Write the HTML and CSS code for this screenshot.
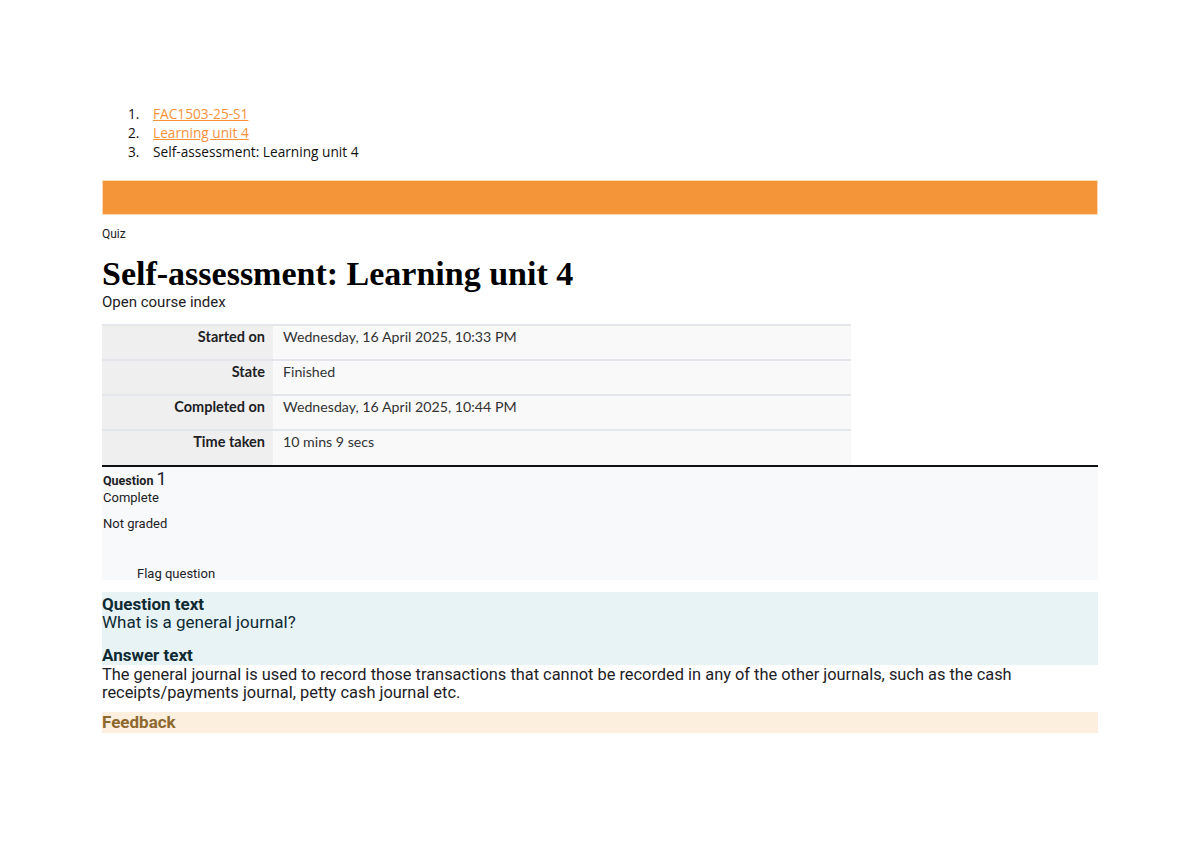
FILE: index.html
```html
<!DOCTYPE html>
<html>
<head>
<meta charset="utf-8">
<link rel="stylesheet" href="styles.css">
</head>
<body>
<div class="page">
  <ol class="crumbs">
    <li><a href="#">FAC1503-25-S1</a></li>
    <li><a href="#">Learning unit 4</a></li>
    <li>Self-assessment: Learning unit 4</li>
  </ol>
  <div class="banner"></div>
  <div class="modtype">Quiz</div>
  <h1 class="title">Self-assessment: Learning unit 4</h1>
  <div class="courseindex">Open course index</div>
  <table class="summary">
    <tr><th>Started on</th><td>Wednesday, 16 April 2025, 10:33 PM</td></tr>
    <tr><th>State</th><td>Finished</td></tr>
    <tr><th>Completed on</th><td>Wednesday, 16 April 2025, 10:44 PM</td></tr>
    <tr><th>Time taken</th><td>10 mins 9 secs</td></tr>
  </table>
  <div class="qinfo">
    <div class="qno">Question <span class="num">1</span></div>
    <div class="qstate">Complete</div>
    <div class="qgrade">Not graded</div>
    <div class="qflag">Flag question</div>
  </div>
  <div class="qtext">
    <div class="label">Question text</div>
    <div class="body">What is a general journal?</div>
    <div class="label answerlabel">Answer text</div>
  </div>
  <div class="answer">The general journal is used to record those transactions that cannot be recorded in any of the other journals, such as the cash receipts/payments journal, petty cash journal etc.</div>
  <div class="feedback">Feedback</div>
</div>
</body>
</html>
```

FILE: styles.css
```css
html, body {
  margin: 0;
  padding: 0;
  background: #ffffff;
}

.page {
  width: 996px;
  margin-left: 102px;
  padding-top: 104px;
  font-family: Roboto, "Liberation Sans", sans-serif;
  color: #1d2125;
}

.crumbs {
  margin: 0;
  padding-left: 41px;
  font-family: "Open Sans", "Liberation Sans", sans-serif;
  font-size: 13.7px;
  line-height: 19px;
  color: #111;
}

.crumbs li {
  padding-left: 10px;
}

.crumbs a {
  color: #f7923a;
  text-decoration: underline;
}

.banner {
  margin-top: 19px;
  height: 35px;
  background: #f5953a;
  border: 1px solid #fbd9b6;
  box-sizing: border-box;
}

.modtype {
  margin-top: 12px;
  font-size: 12px;
  line-height: 14px;
  color: #1d2125;
}

.title {
  margin: 15px 0 0 0;
  font-family: "Liberation Serif", "Times New Roman", serif;
  font-weight: bold;
  font-size: 34px;
  line-height: 36px;
  color: #000;
}

.courseindex {
  font-size: 15px;
  line-height: 18px;
  color: #1d2125;
  padding-top: 1px;
}

.summary {
  margin-top: 13px;
  width: 749px;
  border-collapse: collapse;
  font-family: Lato, "Open Sans", sans-serif;
}

.summary tr {
  height: 35px;
  border-top: 2px solid #e3e6ea;
}

.summary th {
  width: 163px;
  padding: 3px 8px 0 0;
  background: #efefef;
  text-align: right;
  vertical-align: top;
  font-weight: bold;
  font-size: 14.5px;
  color: #1d2125;
  line-height: 16px;
}

.summary td {
  padding: 3px 0 0 10px;
  background: #f9f9fa;
  vertical-align: top;
  font-size: 14.2px;
  color: #333;
  line-height: 16px;
}

.qinfo {
  border-top: 2px solid #111;
  background: #f8f9fa;
  height: 113px;
  font-size: 13px;
  color: #1d2125;
  padding-left: 1px;
}

.qno {
  font-weight: bold;
  font-size: 12.5px;
  line-height: 18px;
  padding-top: 3px;
}

.qno .num {
  font-weight: normal;
  font-size: 18px;
}

.qstate {
  line-height: 15px;
}

.qgrade {
  margin-top: 11px;
  line-height: 15px;
}

.qflag {
  margin-top: 35px;
  padding-left: 34px;
  line-height: 15px;
}

.qtext {
  margin-top: 12px;
  background: #e7f3f5;
  height: 73px;
  color: #0f2a33;
  font-size: 17px;
}

.qtext .label {
  font-weight: bold;
  font-size: 17px;
  line-height: 20px;
  padding-top: 2px;
}

.qtext .body {
  line-height: 17px;
}

.qtext .answerlabel {
  padding-top: 14px;
}

.answer {
  font-size: 16.4px;
  line-height: 18px;
  color: #1d2125;
  margin-top: 1px;
}

.feedback {
  margin-top: 10px;
  height: 21px;
  background: #fcefdd;
  color: #8e682f;
  font-weight: bold;
  font-size: 17px;
  line-height: 21px;
}
```
